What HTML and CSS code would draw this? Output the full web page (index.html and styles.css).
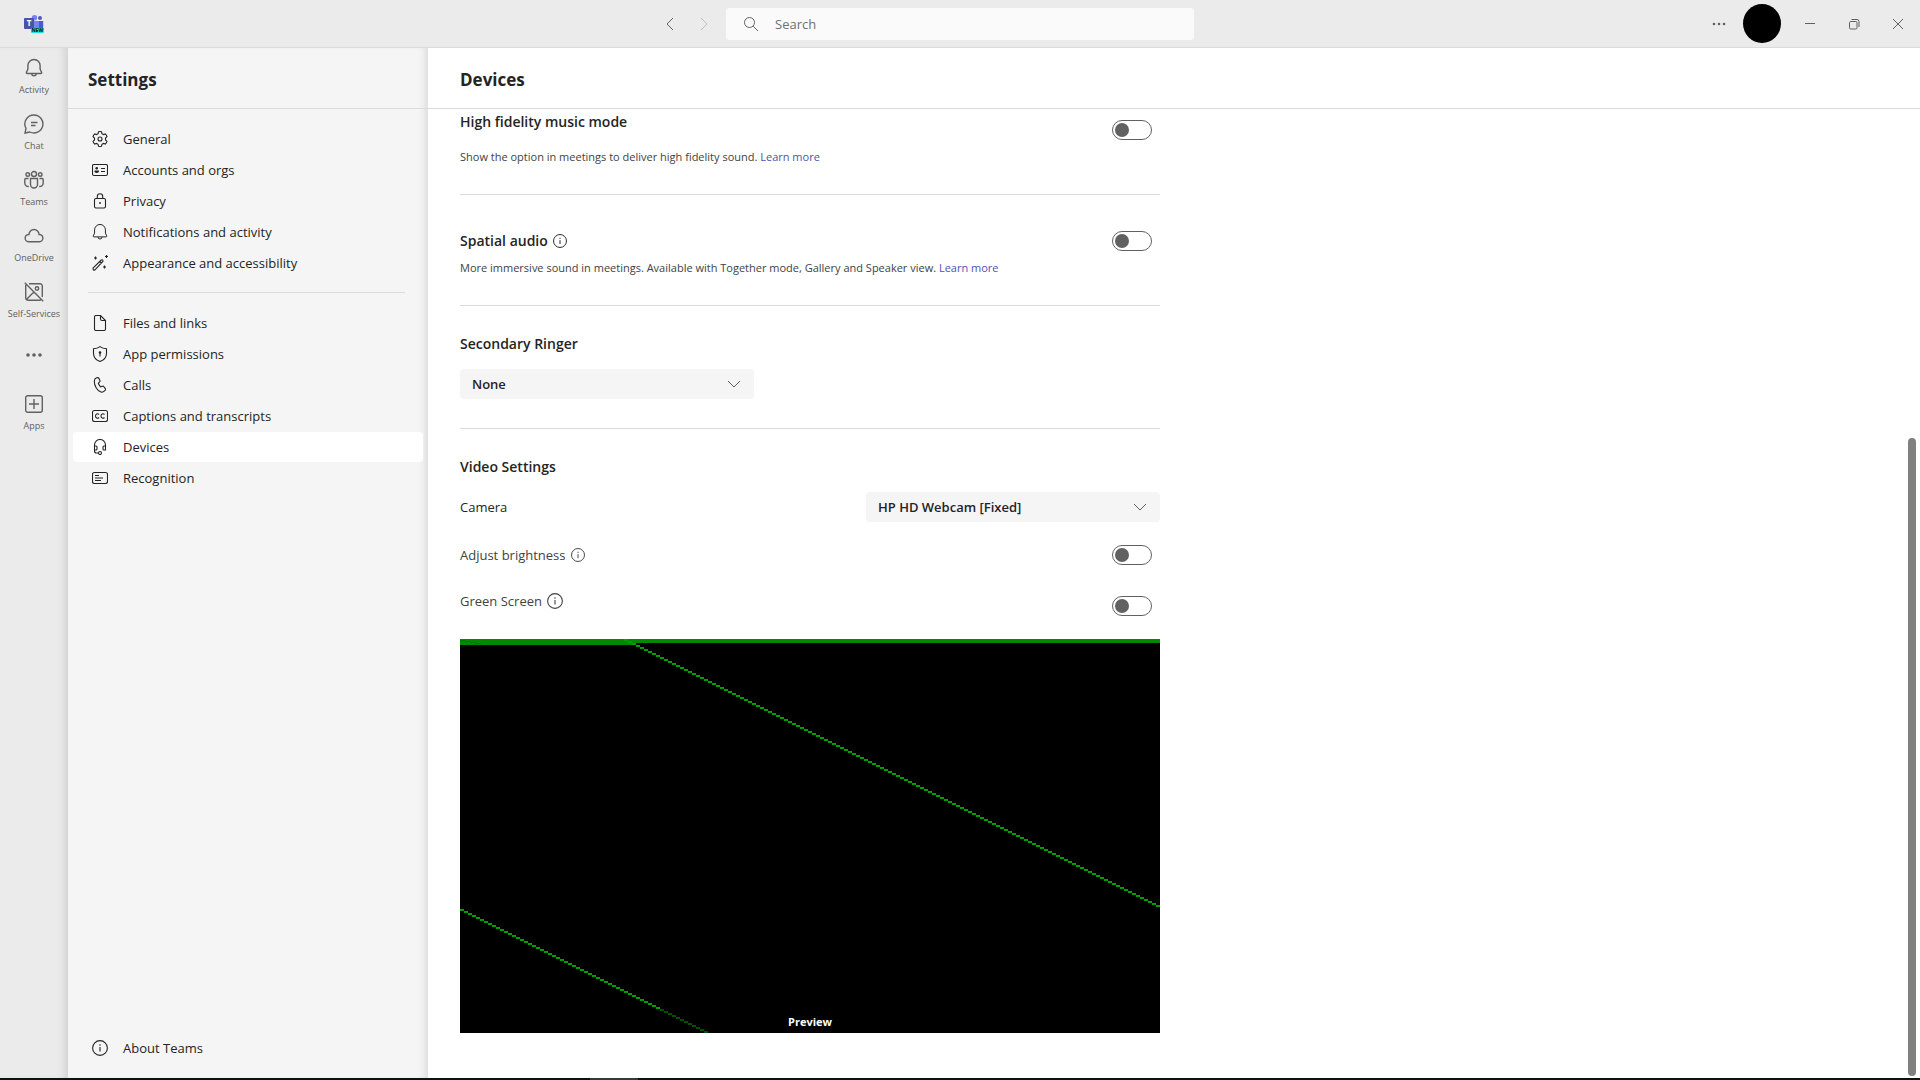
FILE: index.html
```html
<!DOCTYPE html>
<html lang="en">
<head>
<meta charset="utf-8">
<meta name="viewport" content="width=device-width, initial-scale=1">
<title>Settings - Devices</title>
<link rel="stylesheet" href="styles.css">
</head>
<body>
<svg class="defs" aria-hidden="true">
  <defs>
    <path id="i-bell" d="M10 1.500a6.100 6.100 0 0 0-6.100 6.100v3.600L2.400 14.400c-.2.500.1 1.100.7 1.100h13.800c.6 0 .9-.6.700-1.100l-1.500-3.200V7.600A6.100 6.100 0 0 0 10 1.500zM7.700 15.600a2.300 2.300 0 0 0 4.600 0"/>
    <g id="i-info"><circle cx="8" cy="8" r="7.400"/><path d="M8 7v4.500M8 4.300v1.400"/></g>
    <path id="i-chevron" d="M1 4l6 6 6-6"/>
    <rect id="s1" width="4" height="2"/>
    <g id="s2"><use href="#s1"/><use href="#s1" x="4" y="2"/></g>
    <g id="s4"><use href="#s2"/><use href="#s2" x="8" y="4"/></g>
    <g id="s8"><use href="#s4"/><use href="#s4" x="16" y="8"/></g>
    <g id="s16"><use href="#s8"/><use href="#s8" x="32" y="16"/></g>
    <g id="s32"><use href="#s16"/><use href="#s16" x="64" y="32"/></g>
    <g id="s64"><use href="#s32"/><use href="#s32" x="128" y="64"/></g>
    <g id="s128"><use href="#s64"/><use href="#s64" x="256" y="128"/></g>
  </defs>
</svg>
<div class="app">
  <header class="topbar">
    <div class="topbar-left">
      <svg class="logo" viewBox="0 0 20 18" aria-label="Teams">
        <circle cx="10.500" cy="2.700" r="2.700" fill="#7b83eb"/><circle cx="16" cy="3" r="2" fill="#5059c9"/>
        <path d="M13 6h6.200v6a3 3 0 0 1-3 3H13z" fill="#5059c9"/><path d="M6 6h9v9H8z" fill="#7b83eb"/>
        <rect y="3" width="10" height="11" rx="1" fill="#4b53a8"/>
        <text x="5" y="11" class="logo-t">T</text>
        <rect x="7" y="13" width="13" height="5" rx="1" fill="#1fe5e5"/>
        <text x="13.500" y="17.200" class="logo-new">NEW</text>
      </svg>
      <div class="history">
        <button class="icon-btn" aria-label="Back"><svg width="14" height="14" viewBox="0 0 14 14"><path d="M10 1L4 7l6 6"/></svg></button>
        <button class="icon-btn disabled" aria-label="Forward"><svg width="14" height="14" viewBox="0 0 14 14"><path d="M4 1l6 6-6 6"/></svg></button>
      </div>
    </div>
    <label class="search">
      <svg width="16" height="16" viewBox="0 0 16 16"><circle cx="6.500" cy="6.500" r="5"/><path d="M10.200 10.200l4.800 4.800"/></svg>
      <input type="search" placeholder="Search" aria-label="Search">
    </label>
    <div class="topbar-right">
      <button class="icon-btn more" aria-label="More options"><svg class="solid" width="14" height="4" viewBox="0 0 14 4"><circle cx="2" cy="2" r="1.300"/><circle cx="7" cy="2" r="1.300"/><circle cx="12" cy="2" r="1.300"/></svg></button>
      <button class="avatar" aria-label="Account"></button>
      <div class="window-controls">
        <button class="icon-btn" aria-label="Minimize"><svg width="12" height="12" viewBox="0 0 12 12"><path d="M1 5.500h10"/></svg></button>
        <button class="icon-btn" aria-label="Restore"><svg width="12" height="12" viewBox="0 0 12 12"><rect x="1.500" y="3.500" width="7.500" height="7.500" rx="1.200"/><path d="M3.500 1.500h5.500a2 2 0 0 1 2 2v5.500"/></svg></button>
        <button class="icon-btn" aria-label="Close"><svg width="12" height="12" viewBox="0 0 12 12"><path d="M1 1l10 10M11 1L1 11"/></svg></button>
      </div>
    </div>
  </header>

  <nav class="rail" aria-label="Apps">
    <button><svg viewBox="0 0 20 20"><use href="#i-bell"/></svg>Activity</button>
    <button><svg viewBox="0 0 20 20"><path d="M10 1a9 9 0 1 1-4.200 17L1 19l1-4.600A9 9 0 0 1 10 1zM7 8.500h6.500M7 11.500h4.500"/></svg>Chat</button>
    <button><svg viewBox="0 0 20 20"><circle cx="10" cy="4" r="2.500"/><circle cx="3.800" cy="4.500" r="1.800"/><circle cx="16.200" cy="4.500" r="1.800"/><path d="M6.500 8.500h7v6a3.500 3.500 0 0 1-7 0zM4.500 8.500H1.800a1 1 0 0 0-1 1V13a3.500 3.500 0 0 0 4 3.500M15.500 8.500h2.700a1 1 0 0 1 1 1V13a3.500 3.500 0 0 1-4 3.500"/></svg>Teams</button>
    <button><svg viewBox="0 0 20 20"><path d="M5 8.500a5 5 0 0 1 10 0 3.600 3.600 0 0 1 .5 7.200h-11A3.600 3.600 0 0 1 5 8.500z"/></svg>OneDrive</button>
    <button><svg viewBox="0 0 20 20"><path d="M5 1.700h11a2.300 2.300 0 0 1 2.300 2.300v11M16.800 18.300H4A2.300 2.300 0 0 1 1.700 16V2.800M.8.800l18.400 18.400M2.500 17.500L8.800 11a2 2 0 0 1 2 0"/><circle cx="13" cy="6.500" r="1.700"/></svg>Self-Services</button>
    <button class="rail-more" aria-label="More apps"><svg class="solid" viewBox="0 0 20 20"><circle cx="4" cy="10" r="1.800"/><circle cx="10" cy="10" r="1.800"/><circle cx="16" cy="10" r="1.800"/></svg></button>
    <button><svg viewBox="0 0 20 20"><rect x="1.700" y="1.700" width="16.600" height="16.600" rx="2"/><path d="M10 5v10M5 10h10"/></svg>Apps</button>
  </nav>

  <aside class="sidebar">
    <h1 class="pane-title">Settings</h1>
    <ul class="menu">
      <li><button><svg viewBox="0 0 16 16"><circle cx="8" cy="8" r="2"/><path d="M6.500.700a7.500 7.500 0 0 1 3 0l.4 2 1.600.9 2-.6a7.500 7.500 0 0 1 1.500 2.600L13.500 7v2l1.500 1.400a7.500 7.500 0 0 1-1.500 2.600l-2-.6-1.600.9-.4 2a7.500 7.500 0 0 1-3 0l-.4-2-1.600-.9-2 .6A7.500 7.500 0 0 1 1 10.400L2.500 9V7L1 5.600A7.500 7.500 0 0 1 2.500 3l2 .6 1.600-.9z"/></svg>General</button></li>
      <li><button><svg viewBox="0 0 16 16"><rect x=".5" y="2.500" width="15" height="11" rx="1.500"/><circle class="fill" cx="4.700" cy="6.200" r="1.300"/><path class="fill" d="M2.500 8.500h4.400v1.500q-2.200 2-4.400 0z"/><path d="M9 6.500h4M9 9.500h4"/></svg>Accounts and orgs</button></li>
      <li><button><svg viewBox="0 0 16 16"><rect x="2.500" y="5.500" width="11" height="9.500" rx="1.500"/><path d="M5.300 5.500V3.500a2.700 2.700 0 0 1 5.400 0v2"/><circle class="fill" cx="8" cy="10" r=".9"/></svg>Privacy</button></li>
      <li><button><svg viewBox="1 1 18 18"><use href="#i-bell"/></svg>Notifications and activity</button></li>
      <li><button><svg viewBox="0 0 16 16"><path d="M1 13.200L9.200 5q1.800-.8 1.800 1.200L3 14.900q-2 1-2-1.700zM7.700 6.500l1.800 1.600M3.500 1.500v3M2 3h3M14.500 0v3M13 1.500h3M12.500 10.500v3M11 12h3"/></svg>Appearance and accessibility</button></li>
    </ul>
    <hr class="menu-rule">
    <ul class="menu">
      <li><button><svg viewBox="0 0 16 16"><path d="M4 .5h4.500L13.500 5.500v8.500a1.500 1.500 0 0 1-1.500 1.500H4A1.500 1.500 0 0 1 2.500 14V2A1.500 1.500 0 0 1 4 .5zM8.500.5v3.500A1.500 1.500 0 0 0 10 5.500h3.500"/></svg>Files and links</button></li>
      <li><button><svg viewBox="0 0 16 16"><path d="M8 .6c2 1.500 4 2 6.500 2.200v4.700c0 4-2.500 6.500-6.500 8-4-1.500-6.500-4-6.500-8V2.800C4 2.600 6 2.100 8 .6zM8 6.500v4"/><circle class="fill" cx="8" cy="6.500" r="1.300"/></svg>App permissions</button></li>
      <li><button><svg viewBox="0 0 16 16"><path d="M4.500.8l1.300-.2q.8 0 1.200.8l.9 2q.3.800-.3 1.500L6.300 6.300q.7 2 2.300 3.500l2-.6q.800-.2 1.300.5l1.400 1.900q.5.800-.1 1.500l-1 1.100q-1.400 1.400-3.200.8C5 13.600 2.200 8.500 2.300 4q.2-2.500 2.200-3.200z"/></svg>Calls</button></li>
      <li><button><svg viewBox="0 0 16 16"><rect x=".5" y="2.500" width="15" height="11" rx="2"/><path d="M7 6.500C5.500 4.900 3.500 6 3.500 8S5.500 11.100 7 9.500M12.500 6.500C11 4.900 9 6 9 8s2 3.100 3.500 1.500"/></svg>Captions and transcripts</button></li>
      <li><button class="current" aria-current="page"><svg viewBox="0 0 16 16"><path d="M2.500 7V6a5.500 5.500 0 0 1 11 0v1M2.500 7H4a1 1 0 0 1 1 1v2a1 1 0 0 1-1 1H2.500zM13.500 7H12a1 1 0 0 0-1 1v2a1 1 0 0 0 1 1h1.500zM2.500 11v1a2 2 0 0 0 2 2h2"/><circle cx="8" cy="14" r="1.500"/></svg>Devices</button></li>
      <li><button><svg viewBox="0 0 16 16"><rect x=".5" y="2.500" width="15" height="11" rx="2"/><path d="M3 5.500h4M3 8h8M3 10.500h6"/></svg>Recognition</button></li>
    </ul>
    <ul class="menu menu-foot">
      <li><button><svg viewBox="0 0 16 16"><use href="#i-info"/></svg>About Teams</button></li>
    </ul>
  </aside>

  <main class="main">
    <h1 class="pane-title">Devices</h1>
    <div class="scroll">
      <div class="content">
        <section class="block block-first">
          <div class="row row-tall">
            <h2><label for="music">High fidelity music mode</label></h2>
            <input class="switch" type="checkbox" role="switch" id="music">
          </div>
          <p>Show the option in meetings to deliver high fidelity sound. <a href="#music-help">Learn more</a></p>
        </section>
        <section class="block block-roomy">
          <div class="row">
            <h2><label for="spatial">Spatial audio</label><svg class="info" viewBox="0 0 16 16"><use href="#i-info"/></svg></h2>
            <input class="switch" type="checkbox" role="switch" id="spatial">
          </div>
          <p>More immersive sound in meetings. Available with Together mode, Gallery and Speaker view. <a href="#spatial-help">Learn more</a></p>
        </section>
        <section class="block">
          <h2><label for="ringer">Secondary Ringer</label></h2>
          <div class="picker picker-below"><select id="ringer"><option>None</option></select><svg viewBox="0 0 14 14"><use href="#i-chevron"/></svg></div>
        </section>
        <section class="block video">
          <h2>Video Settings</h2>
          <div class="row row-camera">
            <label for="camera">Camera</label>
            <div class="picker"><select id="camera"><option>HP HD Webcam [Fixed]</option></select><svg viewBox="0 0 14 14"><use href="#i-chevron"/></svg></div>
          </div>
          <div class="row row-bright">
            <span class="soft"><label for="bright">Adjust brightness</label><svg class="info" viewBox="0 0 16 16"><use href="#i-info"/></svg></span>
            <input class="switch" type="checkbox" role="switch" id="bright">
          </div>
          <div class="row row-tall row-green">
            <span class="soft"><label for="green">Green Screen</label><svg class="info info-large" viewBox="0 0 16 16"><use href="#i-info"/></svg></span>
            <input class="switch" type="checkbox" role="switch" id="green">
          </div>
          <figure class="preview">
            <svg viewBox="0 0 700 394" shape-rendering="crispEdges" aria-hidden="true">
              <rect width="700" height="394" fill="#000"/>
              <path d="M0 0h700v4H176v2H0z" fill="#008a00"/>
              <path d="M0 1h5v1h5v1h5v1h6v1h-6v-1h-5v-1H5v-1H0z" fill="#007400"/>
              <g fill="#00a000"><use href="#s128" x="164"/><use href="#s8" x="676" y="256"/><use href="#s32" y="270"/><use href="#s16" x="128" y="334"/><use href="#s2" x="192" y="366"/></g>
              <g fill="#005000"><use href="#s8" x="200" y="370"/><use href="#s4" x="232" y="386"/></g>
            </svg>
            <figcaption>Preview</figcaption>
          </figure>
        </section>
      </div>
      <div class="track"><div class="thumb"></div></div>
    </div>
  </main>
  <footer class="taskbar"><span></span></footer>
</div>
</body>
</html>
```
FILE: styles.css
```css
* { box-sizing: border-box; }
body, h1, h2, p, ul, figure { margin: 0; padding: 0; }
body { font: 13px/20px "Open Sans", "Noto Sans", sans-serif; color: #242424; background: #fff; }
button { font: inherit; color: inherit; background: none; border: 0; padding: 0; }
svg { fill: none; stroke: currentColor; flex: none; }
svg .fill, svg.solid { fill: currentColor; stroke: none; }
a { color: #4f52b2; text-decoration: none; }
.defs { position: absolute; width: 0; height: 0; }

.app {
  display: grid;
  grid-template: 48px minmax(0, 1fr) 2px / 68px 360px minmax(0, 1fr);
  height: 100vh;
}

.topbar {
  grid-column: 1 / -1;
  display: grid;
  grid-template-columns: 1fr 468px 1fr;
  align-items: center;
  background: #ebebeb;
  border-bottom: 1px solid #dbdbdb;
  color: #616161;
}
.topbar-left, .topbar-right, .history, .window-controls { display: flex; align-items: center; }
.topbar-left { justify-content: space-between; padding: 0 5px 0 24px; }
.topbar-right { justify-content: flex-end; gap: 7px; }
.logo { width: 20px; height: 18px; stroke: none; }
.logo-t { font-size: 8px; font-weight: 700; text-anchor: middle; fill: #fff; }
.logo-new { font-size: 5px; font-weight: 800; text-anchor: middle; fill: #033; }
.icon-btn { display: grid; place-items: center; width: 34px; height: 32px; }
.icon-btn.disabled { color: #bdbdbd; }
.window-controls .icon-btn { width: 44px; }
.avatar { width: 38px; height: 39px; border-radius: 50%; background: #000; }
.search { display: flex; align-items: center; gap: 16px; height: 32px; padding: 0 17px; border-radius: 4px; background: #fafafa; }
.search input { flex: 1; min-width: 0; border: 0; padding: 0; outline: 0; background: none; font: inherit; color: #616161; }
.search input::placeholder { color: #707070; }

.rail {
  display: flex;
  flex-direction: column;
  gap: 17px;
  padding-top: 10px;
  background: #ebebeb;
  color: #616161;
  box-shadow: inset -8px 0 8px -5px #cfcfcf;
}
.rail button { display: flex; flex-direction: column; align-items: center; gap: 5px; height: 39px; font-size: 9px; line-height: 14px; white-space: nowrap; }
.rail svg { width: 20px; height: 20px; stroke-width: 1.4; }
.rail .rail-more { padding-top: 7px; }

.pane-title { height: 61px; font-size: 17px; line-height: 24px; font-weight: 700; border-bottom: 1px solid #dbdbdb; }
.sidebar { display: flex; flex-direction: column; background: #f5f5f5; box-shadow: inset -8px 0 8px -6px #d6d6d6; }
.sidebar .pane-title { padding: 20px 20px 0; }
.menu { display: flex; flex-direction: column; gap: 1px; padding: 15px 5px; list-style: none; }
.menu button { display: flex; align-items: center; gap: 15px; width: 100%; height: 30px; padding: 0 19px; border-radius: 4px; text-align: left; }
.menu svg { width: 16px; height: 16px; stroke-width: 1.1; }
.menu-rule { width: auto; margin: -1px 23px 0 20px; border: 0; border-top: 1px solid #dbdbdb; }
.menu .current { background: #fff; }
.menu-foot { margin-top: auto; }

.main { display: flex; flex-direction: column; min-height: 0; }
.main .pane-title { padding: 20px 32px 0; }
.scroll { flex: 1; display: flex; justify-content: space-between; min-height: 0; overflow: hidden; }
.content { width: 100%; max-width: 732px; padding-left: 32px; }
.block { padding: 28px 0 29px; border-bottom: 1px solid #dbdbdb; }
.block-first { padding: 3px 0 27px; }
.block-roomy { padding: 36px 0 27px; }
.block h2 { font-size: 14px; font-weight: 600; line-height: 20px; }
.block h2, .soft { display: flex; align-items: center; gap: 5px; }
.block p { margin-top: 7px; font-size: 11px; line-height: 20px; color: #424242; white-space: nowrap; }
.soft { color: #424242; height: 20px; }
.info { width: 14px; height: 14px; stroke-width: 1.1; }
.info-large { width: 16px; height: 16px; }
.row { display: flex; justify-content: space-between; align-items: center; }
.row-tall { height: 28px; align-items: flex-start; }
.row-tall .switch { align-self: flex-end; }
.switch {
  appearance: none;
  display: flex;
  align-items: center;
  width: 40px;
  height: 20px;
  margin: 0 8px;
  padding: 0 2px;
  border: 1px solid #616161;
  border-radius: 10px;
}
.switch::before { content: ""; width: 14px; height: 14px; border-radius: 50%; background: #616161; }
.switch:checked { justify-content: flex-end; }
.picker { display: grid; align-items: center; width: 294px; height: 30px; border-radius: 4px; background: #f5f5f5; color: #616161; }
.picker select, .picker svg { grid-area: 1 / 1; }
.picker select { appearance: none; width: 100%; height: 30px; padding: 0 12px; border: 0; background: none; font: inherit; font-weight: 600; color: #242424; }
.picker svg { justify-self: end; width: 14px; height: 14px; margin-right: 13px; pointer-events: none; }
.picker-below, .row-camera { margin-top: 15px; }
.video { border-bottom: 0; }
.row-bright { margin-top: 23px; }
.row-green { height: 25px; margin-top: 26px; }
.preview { display: grid; margin-top: 23px; background: #000; }
.preview svg, .preview figcaption { grid-area: 1 / 1; }
.preview svg { width: 100%; stroke: none; }
.preview figcaption { place-self: end center; padding-bottom: 1px; font-size: 11px; font-weight: 700; color: #fff; }
.track { display: flex; align-items: flex-end; width: 12px; padding: 0 4px 2px 0; }
.thumb { width: 8px; height: 66%; border-radius: 4px; background: #808080; }

.taskbar { grid-column: 1 / -1; display: flex; background: #101114; }
.taskbar span { width: 48px; margin-left: 590px; background: #37383a; }
```
